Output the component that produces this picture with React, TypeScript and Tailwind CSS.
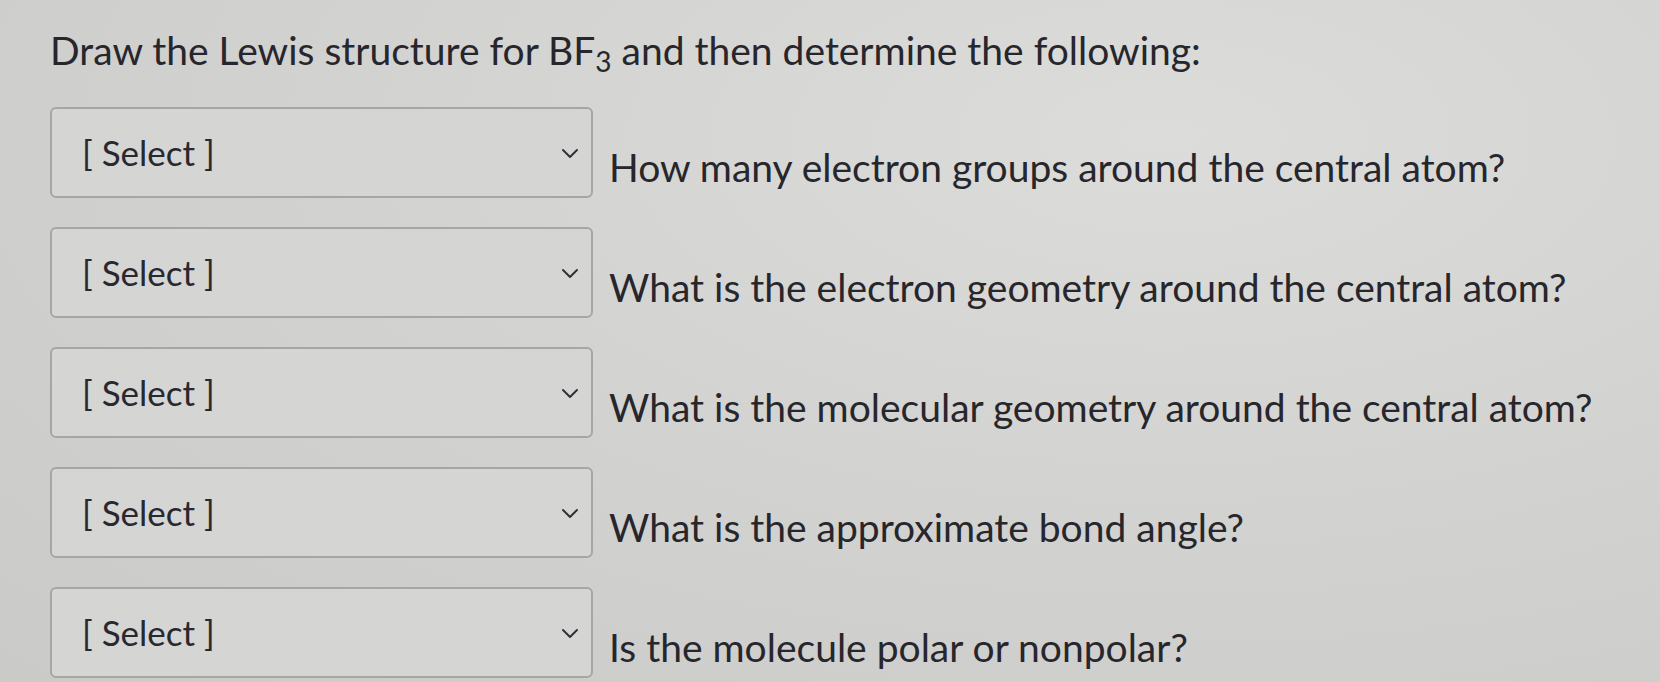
const questions = [
  "How many electron groups around the central atom?",
  "What is the electron geometry around the central atom?",
  "What is the molecular geometry around the central atom?",
  "What is the approximate bond angle?",
  "Is the molecule polar or nonpolar?",
];

const Chevron = () => (
  <svg width="18" height="11" viewBox="0 0 18 11" fill="none" className="text-[#2f2e35]">
    <polyline points="2,2 9,9 16,2" stroke="currentColor" strokeWidth="1.9" strokeLinecap="round" strokeLinejoin="round" />
  </svg>
);

const SelectBox = () => (
  <div className="flex h-[91px] w-[543px] shrink-0 items-center justify-between rounded-[6px] border-2 border-[#a6a6a5] bg-[#d5d5d3] pl-[30px] pr-[12px]">
    <span className="text-[35px] leading-none text-[#29282e]">[ Select ]</span>
    <span className="mt-[2px]">
      <Chevron />
    </span>
  </div>
);

export default function App() {
  return (
    <div
      className="min-h-screen w-full overflow-hidden bg-[#d1d1cf] bg-[radial-gradient(ellipse_at_70%_20%,#dcdcda_0%,#d2d2d0_50%,#cacac8_100%)] pl-[50px] pt-[24px] text-[#27262c]"
      style={{ fontFamily: "Lato, 'Open Sans', sans-serif" }}
    >
      <h1 className="text-[39px] font-normal leading-[52px]">
        Draw the Lewis structure for BF<sub className="text-[28px]">3</sub> and then determine the following:
      </h1>
      <div className="mt-[31px] flex flex-col gap-[29px]">
        {questions.map((q) => (
          <div key={q} className="flex items-start">
            <SelectBox />
            <span className="ml-[16px] mt-[36px] text-[39px] leading-[48px] whitespace-nowrap">{q}</span>
          </div>
        ))}
      </div>
    </div>
  );
}
